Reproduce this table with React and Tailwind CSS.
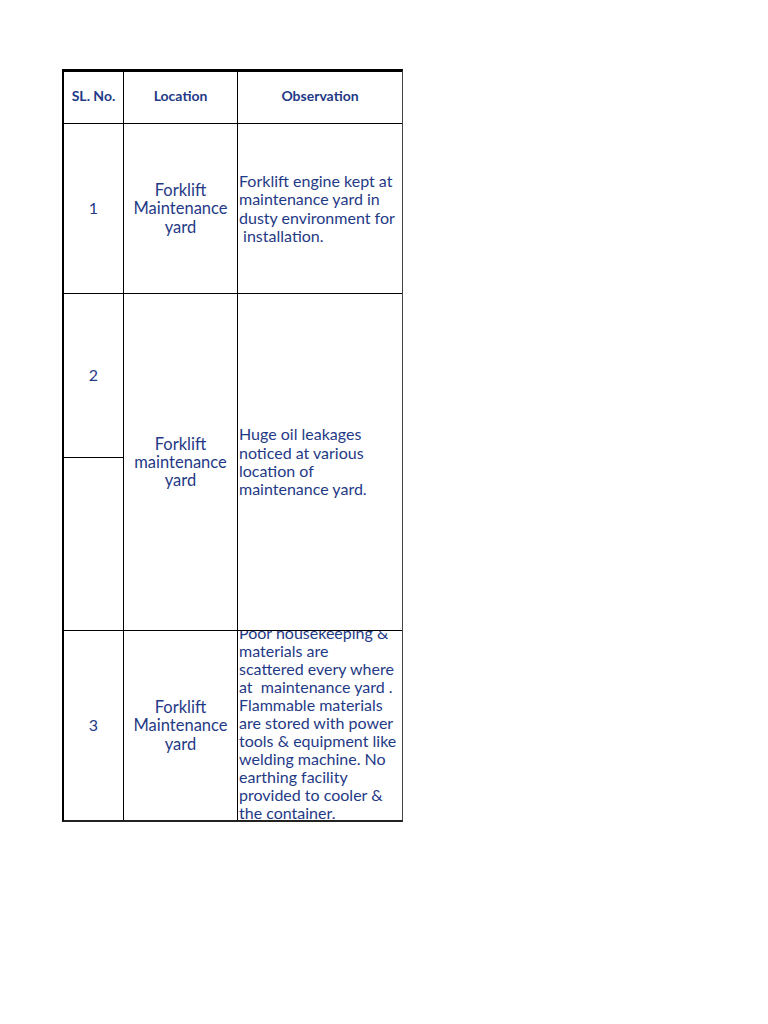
const ROWS = [
  {
    sl: '1',
    location: ['Forklift', 'Maintenance', 'yard'],
    obs: ['Forklift engine kept at', 'maintenance yard in', 'dusty environment for', '\u00a0installation.'],
  },
  {
    sl: '2',
    location: ['Forklift', 'maintenance', 'yard'],
    obs: ['Huge oil leakages', 'noticed at various', 'location of', 'maintenance yard.'],
  },
  {
    sl: '3',
    location: ['Forklift', 'Maintenance', 'yard'],
    obs: [
      'Poor housekeeping &',
      'materials are',
      'scattered every where',
      'at\u00a0 maintenance yard .',
      'Flammable materials',
      'are stored with power',
      'tools & equipment like',
      'welding machine. No',
      'earthing facility',
      'provided to cooler &',
      'the container.',
    ],
  },
]

function Lines({ lines, center }) {
  return (
    <div className={center ? 'text-center' : 'text-left'}>
      {lines.map((l, i) => (
        <div key={i} className="whitespace-nowrap">{l}</div>
      ))}
    </div>
  )
}

export default function App() {
  const [r1, r2, r3] = ROWS
  const cell = 'flex items-center overflow-hidden border-black'
  const head = `${cell} justify-center border-b pb-[3px] text-[14px] font-bold`
  return (
    <div className="min-h-[1024px] bg-white pt-[69px] pl-[62px]" style={{ fontFamily: 'Lato, "Liberation Sans", sans-serif' }}>
      <div className="w-[341px] border-t-[3px] border-l-2 border-b-2 border-r border-t-black border-l-black border-b-[#222] border-r-[#444] text-[#1f3a86] text-[16px] leading-[18.3px]">
        <div className="grid grid-cols-[60px_114px_164px] grid-rows-[52px_170px_164px_173px_189px]">
          {/* header */}
          <div className={`${head} border-r`}>SL. No.</div>
          <div className={`${head} border-r`}>Location</div>
          <div className={head}>Observation</div>

          {/* row 1 */}
          <div className={`${cell} justify-center border-r border-b`}>{r1.sl}</div>
          <div className={`${cell} justify-center border-r border-b text-[16.5px]`}><Lines lines={r1.location} center /></div>
          <div className={`${cell} border-b pl-px`}><Lines lines={r1.obs} /></div>

          {/* row 2 */}
          <div className={`${cell} justify-center border-r border-b`}>{r2.sl}</div>
          <div className={`${cell} row-span-2 justify-center border-r border-b text-[16.5px]`}><Lines lines={r2.location} center /></div>
          <div className={`${cell} row-span-2 border-b pl-px`}><Lines lines={r2.obs} /></div>
          <div className={`${cell} border-r border-b`} />

          {/* row 3: text overflows the cell, clipped top and bottom as in the sheet */}
          <div className={`${cell} justify-center border-r`}>{r3.sl}</div>
          <div className={`${cell} justify-center border-r text-[16.5px]`}><Lines lines={r3.location} center /></div>
          <div className={`${cell} pl-px pb-[5px] leading-[18px]`}><Lines lines={r3.obs} /></div>
        </div>
      </div>
    </div>
  )
}
